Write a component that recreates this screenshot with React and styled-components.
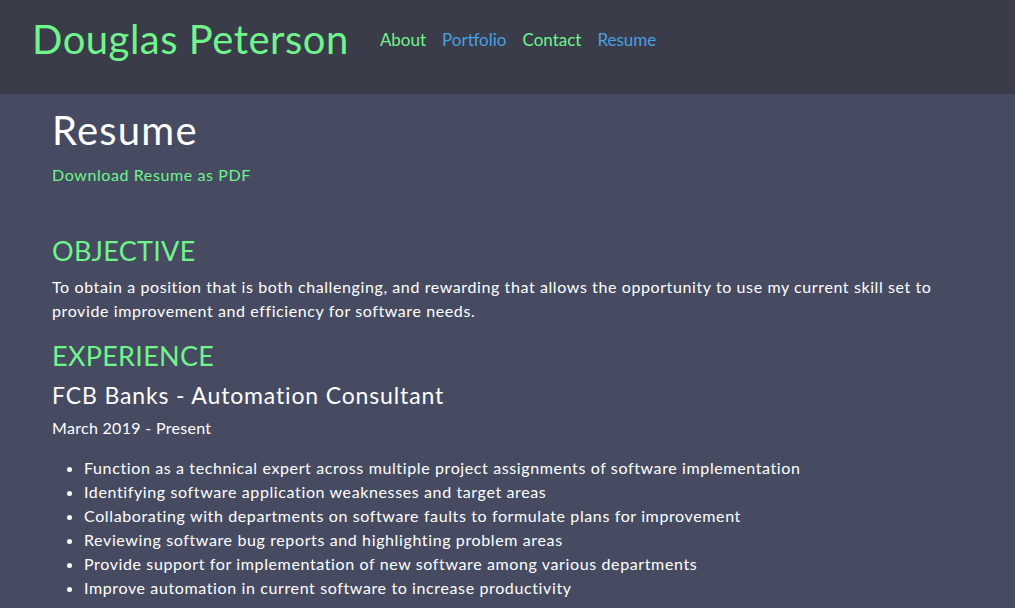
import React from "react";
import { styled, createGlobalStyle } from "styled-components";

const GlobalStyle = createGlobalStyle`
  html, body {
    margin: 0;
    padding: 0;
    background: #464b62;
    font-family: Lato, "Open Sans", sans-serif;
    color: #ffffff;
  }
`;

const green = "#6ff58b";
const blue = "#4aa0e0";

const Header = styled.header`
  height: 94px;
  background: #3a3c4a;
  display: flex;
  align-items: flex-start;
  padding: 17px 32px 0;
  box-sizing: border-box;
`;

const Name = styled.a`
  font-size: 40px;
  letter-spacing: 0.5px;
  color: ${green};
  text-decoration: none;
  line-height: 44px;
  margin-right: 31px;
`;

const Nav = styled.nav`
  display: flex;
  gap: 16px;
  padding-top: 12px;
`;

const NavLink = styled.a`
  font-size: 17px;
  color: ${(p) => (p.$alt ? blue : green)};
  text-decoration: none;
`;

const Main = styled.main`
  padding: 12px 52px 0;
`;

const Title = styled.h1`
  font-size: 40px;
  letter-spacing: 1.2px;
  font-weight: 400;
  margin: 0;
  line-height: 48px;
`;

const Download = styled.a`
  display: block;
  margin-top: 9px;
  font-size: 16px;
  letter-spacing: 0.6px;
  color: ${green};
  text-decoration: none;
  line-height: 24px;
`;

const Section = styled.h2`
  font-size: 27px;
  letter-spacing: 0.3px;
  font-weight: 400;
  color: ${green};
  margin: ${(p) => (p.$first ? "47px" : "16px")} 0 0;
  line-height: 34px;
`;

const Text = styled.p`
  font-size: 16px;
  letter-spacing: 0.6px;
  line-height: 24px;
  margin: 7px 0 0;
`;

const Job = styled.h3`
  font-size: 23px;
  letter-spacing: 0.85px;
  font-weight: 400;
  margin: 6px 0 0;
  line-height: 32px;
`;

const Dates = styled.div`
  font-size: 16px;
  letter-spacing: 0.3px;
  line-height: 24px;
  margin-top: 5px;
`;

const List = styled.ul`
  margin: 16px 0 0;
  padding-left: 32px;
`;

const Item = styled.li`
  font-size: 16px;
  letter-spacing: 0.62px;
  line-height: 24px;
`;

const duties = [
  "Function as a technical expert across multiple project assignments of software implementation",
  "Identifying software application weaknesses and target areas",
  "Collaborating with departments on software faults to formulate plans for improvement",
  "Reviewing software bug reports and highlighting problem areas",
  "Provide support for implementation of new software among various departments",
  "Improve automation in current software to increase productivity",
];

const App = () => {
  return (
    <>
      <GlobalStyle />
      <Header>
        <Name href="#">Douglas Peterson</Name>
        <Nav>
          <NavLink href="#">About</NavLink>
          <NavLink href="#" $alt>Portfolio</NavLink>
          <NavLink href="#">Contact</NavLink>
          <NavLink href="#" $alt>Resume</NavLink>
        </Nav>
      </Header>
      <Main>
        <Title>Resume</Title>
        <Download href="#">Download Resume as PDF</Download>
        <Section $first>OBJECTIVE</Section>
        <Text>
          To obtain a position that is both challenging, and rewarding that allows the opportunity to use my current skill set to
          provide improvement and efficiency for software needs.
        </Text>
        <Section>EXPERIENCE</Section>
        <Job>FCB Banks - Automation Consultant</Job>
        <Dates>March 2019 - Present</Dates>
        <List>
          {duties.map((d) => (
            <Item key={d}>{d}</Item>
          ))}
        </List>
      </Main>
    </>
  );
};

export default App;
